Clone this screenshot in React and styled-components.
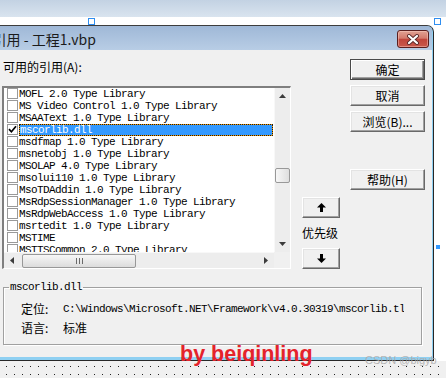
import React from "react";
import styled, { createGlobalStyle, css } from "styled-components";

const CJK = `"Noto Sans CJK SC", "Microsoft YaHei", sans-serif`;
const MONO = `"Liberation Mono", "Courier New", monospace`;

const GlobalStyle = createGlobalStyle`
  html, body { margin: 0; padding: 0; background: #fff; }
  body { width: 446px; height: 378px; overflow: hidden; }
`;

const Page = styled.div`
  position: relative;
  width: 446px;
  height: 378px;
  display: flex;
  flex-direction: column;
  overflow: hidden;
  background: #fff;
`;

const TopStrip = styled.div`
  height: 17px;
  flex: none;
  background: linear-gradient(#c3d2e3, #d9e4ef);
`;

const HandleStrip = styled.div`
  height: 8px;
  flex: none;
  display: flex;
  align-items: flex-start;
`;

const Handle = styled.div`
  width: 7px;
  height: 7px;
  box-sizing: border-box;
  margin-top: 1px;
  margin-left: ${(p) => p.$left}px;
  border: 1px solid #2f8ef0;
  background: #fff;
  flex: none;
`;

const WindowRow = styled.div`
  display: flex;
  height: 336px;
  flex: none;
`;

const Window = styled.div`
  width: 434px;
  box-sizing: border-box;
  display: flex;
  flex-direction: column;
  border-top: 1px solid #3d3d3d;
  border-right: 1px solid #272727;
  border-bottom: 1px solid #272727;
  border-top-right-radius: 7px;
  padding: 0 1px 3px 0;
  overflow: hidden;
  background: #8fd0f2;
`;

const SideStrip = styled.div`
  width: 12px;
  background: #fff;
  display: flex;
  flex-direction: column;
`;

const SideHandle = styled.div`
  width: 4px;
  height: 4px;
  margin: 220px 0 0 2px;
  background: #3399ff;
`;

const TitleBar = styled.div`
  height: 24px;
  flex: none;
  display: flex;
  justify-content: space-between;
  align-items: flex-start;
  background: linear-gradient(#9fb8d7, #b8cde5);
`;

const TitleText = styled.div`
  margin-left: -7.5px;
  padding-top: 1px;
  font: 14px/24px ${CJK};
  color: #1b1b1b;
  white-space: nowrap;
`;

const CloseButton = styled.div`
  width: 32px;
  height: 18px;
  box-sizing: border-box;
  margin: 4px 3px 0 0;
  border: 1px solid #5a1f1f;
  border-radius: 3px;
  background: linear-gradient(#e0a193 0%, #d47a6c 45%, #c0453b 52%, #c9594c 100%);
  box-shadow: inset 0 0 0 1px rgba(255, 210, 200, 0.45);
  display: flex;
  align-items: center;
  justify-content: center;
`;

const Body = styled.div`
  height: 307px;
  flex: none;
  display: flex;
  flex-direction: column;
  background: #f0f0f0;
  font: 12px ${CJK};
  color: #000;
`;

const TopSection = styled.div`
  display: flex;
  height: 219px;
  flex: none;
`;

const LeftCol = styled.div`
  width: 289px;
  margin-left: 2px;
  display: flex;
  flex-direction: column;
`;

const Label = styled.div`
  margin: 11px 0 0 1px;
  height: 12px;
  line-height: 12px;
  white-space: nowrap;
`;

const ListBox = styled.div`
  margin-top: 13px;
  height: 183px;
  box-sizing: border-box;
  display: grid;
  grid-template-columns: 1fr 16px;
  grid-template-rows: 1fr 16px;
  border-style: solid;
  border-width: 2px 1px 1px 2px;
  border-color: #7f7f7f #ffffff #ffffff #7f7f7f;
  background: #fff;
`;

const Items = styled.div`
  overflow: hidden;
`;

const Row = styled.div`
  height: 12px;
  display: flex;
  align-items: flex-start;
  font: 11px/12px ${MONO};
  letter-spacing: -0.6px;
  white-space: nowrap;
  color: #000;
`;

const Check = styled.div`
  width: 11px;
  height: 11px;
  box-sizing: border-box;
  margin: 0 1px 0 3px;
  border: 1px solid #9a9a9a;
  background: #fff;
  flex: none;
  display: flex;
  align-items: center;
  justify-content: center;
`;

const ItemText = styled.div`
  ${(p) =>
    p.$selected &&
    css`
      flex: 1;
      margin-right: 1px;
      height: 12px;
      box-sizing: border-box;
      line-height: 10px;
      color: #fff;
      border: 1px dotted #1a1a1a;
      background: linear-gradient(#3399ff, #3399ff) padding-box,
        linear-gradient(#f39a00, #f39a00) border-box;
    `}
`;

const VScroll = styled.div`
  display: flex;
  flex-direction: column;
  background: #ededed;
  border-left: 1px solid #f8f8f8;
  box-sizing: border-box;
`;

const ArrowCell = styled.div`
  flex: none;
  width: ${(p) => (p.$h ? "16px" : "auto")};
  height: ${(p) => (p.$h ? "auto" : "16px")};
  display: flex;
  align-items: center;
  justify-content: center;
`;

const VTrack = styled.div`
  flex: 1;
`;

const VThumb = styled.div`
  margin-top: 64px;
  width: 15px;
  height: 15px;
  box-sizing: border-box;
  border: 1px solid #989898;
  border-radius: 2px;
  background: linear-gradient(to right, #f7f7f7, #dedede);
`;

const HScroll = styled.div`
  display: flex;
  background: #ededed;
  border-top: 1px solid #f8f8f8;
`;

const HTrack = styled.div`
  flex: 1;
  display: flex;
  align-items: center;
`;

const HThumb = styled.div`
  margin-left: 2px;
  width: 114px;
  height: 14px;
  box-sizing: border-box;
  border: 1px solid #989898;
  border-radius: 2px;
  background: linear-gradient(#f7f7f7, #dcdcdc);
  display: flex;
  align-items: center;
  justify-content: center;
`;

const Corner = styled.div`
  background: #f0f0f0;
`;

const MidCol = styled.div`
  width: 38px;
  margin-left: 11px;
  padding-top: 147px;
  display: flex;
  flex-direction: column;
`;

const Priority = styled.div`
  margin: 9px 0;
  height: 12px;
  line-height: 12px;
  white-space: nowrap;
`;

const RightCol = styled.div`
  width: 75px;
  margin-left: 10px;
  padding-top: 9px;
  display: flex;
  flex-direction: column;
  gap: 5px;
`;

const Btn = styled.button`
  height: 21px;
  width: 100%;
  box-sizing: border-box;
  padding: 0;
  margin-top: ${(p) => p.$push || 0}px;
  font: 12px/12px ${CJK};
  color: #000;
  background: #f0f0f0;
  border: 1px solid;
  border-color: #ffffff #696969 #696969 #ffffff;
  box-shadow: inset -1px -1px #a0a0a0, inset 1px 1px #e3e3e3;
  display: flex;
  align-items: center;
  justify-content: center;
  white-space: nowrap;
  ${(p) =>
    p.$primary &&
    css`
      border-color: #4a4a4a;
      box-shadow: inset 1px 1px #ffffff, inset -1px -1px #696969,
        inset -2px -2px #a0a0a0;
    `}
`;

const GroupBox = styled.fieldset`
  margin: 12px 0 0 3px;
  padding: 0;
  width: 419px;
  height: 64px;
  box-sizing: border-box;
  border: 1px solid #a0a0a0;
  box-shadow: 1px 1px 0 #fff, inset 1px 1px 0 #fff;
`;

const Legend = styled.legend`
  margin-left: 5px;
  padding: 0 1px;
  font: 11px/12px ${MONO};
  letter-spacing: -0.6px;
`;

const InfoList = styled.div`
  margin-top: 6px;
`;

const InfoRow = styled.div`
  height: 19px;
  display: flex;
  align-items: center;
  padding-left: 17px;
`;

const InfoLabel = styled.div`
  width: 42px;
  flex: none;
  line-height: 12px;
`;

const InfoValue = styled.div`
  width: 341px;
  overflow: hidden;
  white-space: nowrap;
  line-height: 12px;
  ${(p) =>
    p.$mono &&
    css`
      font: 11px/12px ${MONO};
      letter-spacing: -0.6px;
    `}
`;

const DotArea = styled.div`
  flex: 1;
  background-color: #f0f0f0;
  background-image: radial-gradient(circle at 4.5px 4.5px, #222 0.6px, transparent 0.7px);
  background-size: 8px 8px;
  background-position: 2px 1px;
`;

const Watermark = styled.div`
  position: absolute;
  left: 180px;
  top: 344px;
  font: bold 21.5px/1 "Liberation Sans", Arial, sans-serif;
  color: #e4232b;
  white-space: nowrap;
`;

const Csdn = styled.div`
  position: absolute;
  left: 365px;
  top: 354px;
  font: 11px/12px "Liberation Sans", Arial, sans-serif;
  color: rgba(170, 170, 170, 0.85);
  white-space: nowrap;
`;

const items = [
  "MOFL 2.0 Type Library",
  "MS Video Control 1.0 Type Library",
  "MSAAText 1.0 Type Library",
  "mscorlib.dll",
  "msdfmap 1.0 Type Library",
  "msnetobj 1.0 Type Library",
  "MSOLAP 4.0 Type Library",
  "msolui110 1.0 Type Library",
  "MsoTDAddin 1.0 Type Library",
  "MsRdpSessionManager 1.0 Type Library",
  "MsRdpWebAccess 1.0 Type Library",
  "msrtedit 1.0 Type Library",
  "MSTIME",
  "MSTTSCommon 2.0 Type Library",
];
const selected = 3;

const Tri = ({ dir }) => {
  const pts = {
    up: "0,4 3.5,0 7,4",
    down: "0,0 3.5,4 7,0",
    left: "4,0 0,3.5 4,7",
    right: "0,0 4,3.5 0,7",
  }[dir];
  const vertical = dir === "up" || dir === "down";
  return (
    <svg width={vertical ? 7 : 4} height={vertical ? 4 : 7}>
      <polygon points={pts} fill="#3c3c3c" />
    </svg>
  );
};

const BigArrow = ({ down }) => (
  <svg width="9" height="9" viewBox="0 0 9 9">
    <g transform={down ? "rotate(180 4.5 4.5)" : undefined}>
      <polygon points="4.5,0 9,4.5 0,4.5" fill="#000" />
      <rect x="3" y="4" width="3" height="5" fill="#000" />
    </g>
  </svg>
);

const CloseX = () => (
  <svg width="14" height="11" viewBox="0 0 14 11">
    <path d="M3 2 L11 9 M11 2 L3 9" stroke="#5b2b2b" strokeWidth="4" strokeLinecap="round" />
    <path d="M3 2 L11 9 M11 2 L3 9" stroke="#fff" strokeWidth="2.2" strokeLinecap="round" />
  </svg>
);

const Grip = () => (
  <svg width="7" height="6">
    <path d="M0.5 0 V6 M3.5 0 V6 M6.5 0 V6" stroke="#6a6a6a" strokeWidth="1" />
  </svg>
);

const CheckMark = () => (
  <svg width="9" height="9" viewBox="0 0 9 9">
    <path d="M1 4.2 L3.4 6.8 L8 1.2" fill="none" stroke="#000" strokeWidth="1.7" />
  </svg>
);

export default function App() {
  return (
    <Page>
      <GlobalStyle />
      <TopStrip />
      <HandleStrip>
        <Handle $left={88} />
        <Handle $left={339} />
      </HandleStrip>
      <WindowRow>
        <Window>
          <TitleBar>
            <TitleText>引用 - 工程1.vbp</TitleText>
            <CloseButton>
              <CloseX />
            </CloseButton>
          </TitleBar>
          <Body>
            <TopSection>
              <LeftCol>
                <Label>可用的引用(A):</Label>
                <ListBox>
                  <Items>
                    {items.map((name, i) => (
                      <Row key={name}>
                        <Check>{i === selected && <CheckMark />}</Check>
                        <ItemText $selected={i === selected}>{name}</ItemText>
                      </Row>
                    ))}
                  </Items>
                  <VScroll>
                    <ArrowCell>
                      <Tri dir="up" />
                    </ArrowCell>
                    <VTrack>
                      <VThumb />
                    </VTrack>
                    <ArrowCell>
                      <Tri dir="down" />
                    </ArrowCell>
                  </VScroll>
                  <HScroll>
                    <ArrowCell $h>
                      <Tri dir="left" />
                    </ArrowCell>
                    <HTrack>
                      <HThumb>
                        <Grip />
                      </HThumb>
                    </HTrack>
                    <ArrowCell $h>
                      <Tri dir="right" />
                    </ArrowCell>
                  </HScroll>
                  <Corner />
                </ListBox>
              </LeftCol>
              <MidCol>
                <Btn>
                  <BigArrow />
                </Btn>
                <Priority>优先级</Priority>
                <Btn>
                  <BigArrow down />
                </Btn>
              </MidCol>
              <RightCol>
                <Btn $primary>确定</Btn>
                <Btn>取消</Btn>
                <Btn>浏览(B)...</Btn>
                <Btn $push={32}>帮助(H)</Btn>
              </RightCol>
            </TopSection>
            <GroupBox>
              <Legend>mscorlib.dll</Legend>
              <InfoList>
                <InfoRow>
                  <InfoLabel>定位:</InfoLabel>
                  <InfoValue $mono>
                    C:\Windows\Microsoft.NET\Framework\v4.0.30319\mscorlib.tlb
                  </InfoValue>
                </InfoRow>
                <InfoRow>
                  <InfoLabel>语言:</InfoLabel>
                  <InfoValue>标准</InfoValue>
                </InfoRow>
              </InfoList>
            </GroupBox>
          </Body>
        </Window>
        <SideStrip>
          <SideHandle />
        </SideStrip>
      </WindowRow>
      <DotArea />
      <Watermark>by beiqinling</Watermark>
      <Csdn>CSDN @bigyb</Csdn>
    </Page>
  );
}
